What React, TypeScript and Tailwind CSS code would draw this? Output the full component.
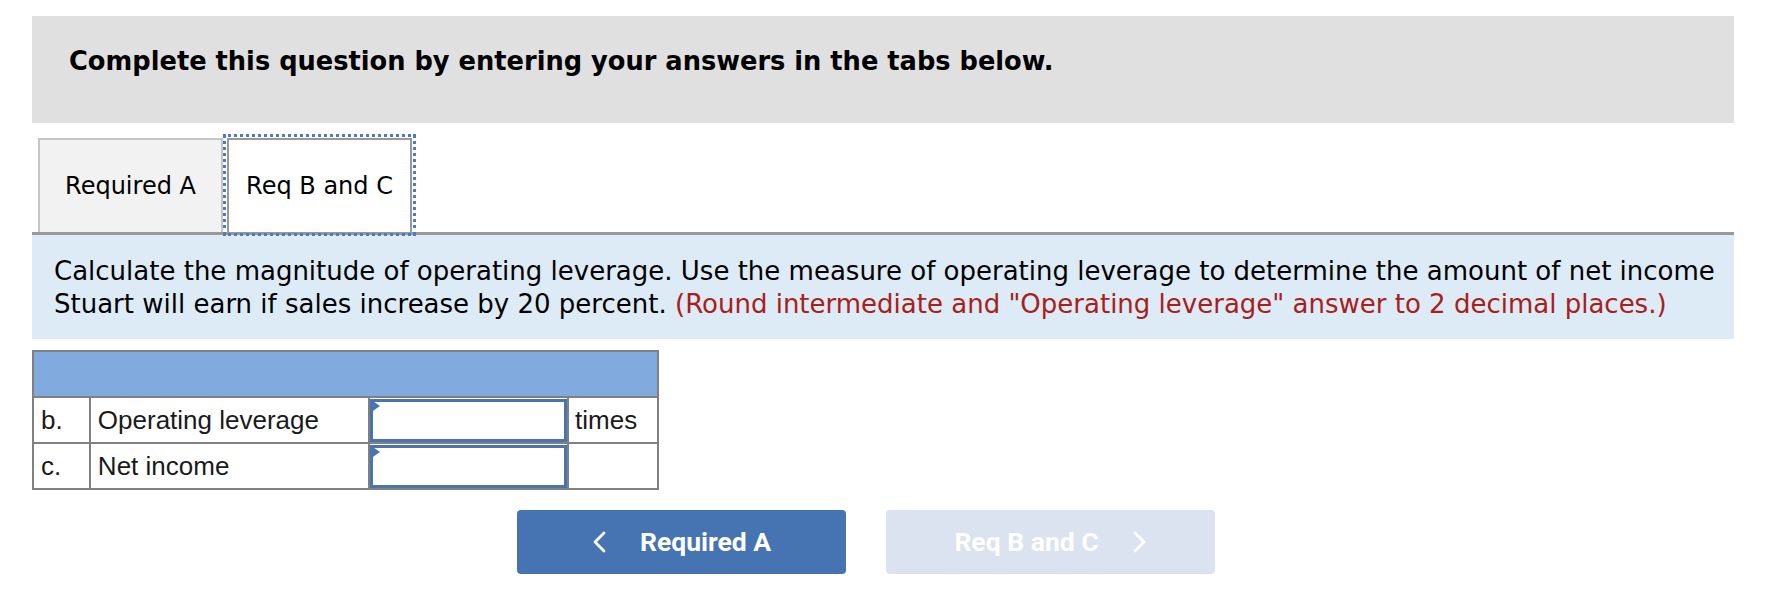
import React from 'react';

function Chevron({ dir }: { dir: 'left' | 'right' }) {
  return (
    <svg width="15" height="22" viewBox="0 0 15 22" fill="none" className="shrink-0">
      <polyline
        points={dir === 'left' ? '12,2 3,11 12,20' : '3,2 12,11 3,20'}
        stroke="white"
        strokeWidth="2.8"
        strokeLinecap="round"
        strokeLinejoin="round"
      />
    </svg>
  );
}

function AnswerInput() {
  return (
    <td className="border-2 border-[#808080] bg-white p-0">
      <div className="relative h-[43px] border-[3px] border-[#4a74b0] bg-white">
        {/* little marker in the corner */}
        <div className="absolute -left-[3px] -top-[3px] h-0 w-0 border-y-[7px] border-l-[10px] border-y-transparent border-l-[#4a74b0]" />
      </div>
    </td>
  );
}

export default function App() {
  const rows = [
    { key: 'b.', label: 'Operating leverage', unit: 'times' },
    { key: 'c.', label: 'Net income', unit: '' },
  ];

  return (
    <div className="min-h-[600px] w-[1792px] bg-white pl-[32px] pt-[16px]">
      <div className="w-[1702px]">
        {/* Instruction header */}
        <div className="h-[107px] bg-[#e0e0e0] pl-[37px] pt-[28px]">
          <p className="font-['DejaVu_Sans',Verdana,sans-serif] text-[25.7px] font-bold leading-[34px] text-black">
            Complete this question by entering your answers in the tabs below.
          </p>
        </div>

        {/* Tabs */}
        <div className="mt-[12px] flex h-[100px] items-end border-b-[3px] border-[#999999] pl-[6px]">
          <div className="flex h-[94px] w-[185px] items-center justify-center border-2 border-b-0 border-[#c6c6c6] bg-[#f2f2f2] font-['DejaVu_Sans',Verdana,sans-serif] text-[24px] text-black">
            Required A
          </div>
          <div className="ml-[4px] flex h-[94px] w-[185px] items-center justify-center border-2 border-b-0 border-[#999999] bg-white font-['DejaVu_Sans',Verdana,sans-serif] text-[24px] text-black outline-[3px] outline-offset-[1px] outline-dotted outline-[#4a7bc8]">
            Req B and C
          </div>
        </div>

        {/* Question text */}
        <div className="h-[104px] bg-[#ddebf7] pl-[22px] pt-[20px]">
          <p className="whitespace-nowrap font-['DejaVu_Sans',Verdana,sans-serif] text-[26px] leading-[33px] text-black">
            Calculate the magnitude of operating leverage. Use the measure of operating leverage to determine the amount of net income
            <br />
            Stuart will earn if sales increase by 20 percent.{' '}
            <span className="text-[#a8201a]">
              (Round intermediate and "Operating leverage" answer to 2 decimal places.)
            </span>
          </p>
        </div>

        {/* Answer table */}
        <table className="mt-[11px] w-[627px] border-collapse font-['Liberation_Sans',Arial,sans-serif] text-[26px] text-[#1a1a1a]">
          <colgroup>
            <col className="w-[57px]" />
            <col className="w-[280px]" />
            <col className="w-[200px]" />
            <col className="w-[90px]" />
          </colgroup>
          <thead>
            <tr className="h-[46px] bg-[#81aadf]">
              <th colSpan={4} className="border-2 border-[#808080]" />
            </tr>
          </thead>
          <tbody>
            {rows.map((row) => (
              <tr key={row.key} className="h-[46px]">
                <td className="border-2 border-[#808080] pl-[7px] leading-none">{row.key}</td>
                <td className="border-2 border-[#808080] pl-[7px] leading-none">{row.label}</td>
                <AnswerInput />
                <td className="border-2 border-[#808080] pl-[6px] leading-none">{row.unit}</td>
              </tr>
            ))}
          </tbody>
        </table>

        {/* Navigation buttons */}
        <div className="mt-[20px] flex gap-[40px] pl-[485px]">
          <button className="flex h-[64px] w-[329px] items-center justify-center gap-[33px] rounded-[4px] bg-[#4674b2] font-['Roboto',sans-serif] text-[26.5px] font-bold text-white">
            <Chevron dir="left" />
            <span>Required A</span>
          </button>
          <button className="flex h-[64px] w-[329px] items-center justify-center gap-[33px] rounded-[4px] bg-[#dae3ef] font-['Roboto',sans-serif] text-[26.5px] font-bold text-white">
            <span>Req B and C</span>
            <Chevron dir="right" />
          </button>
        </div>
      </div>
    </div>
  );
}
